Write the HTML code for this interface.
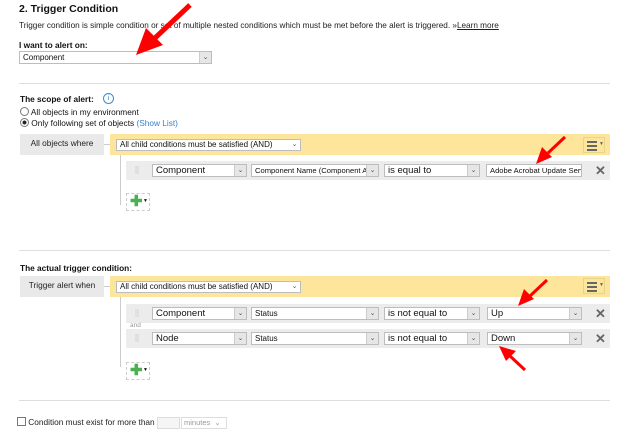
<!DOCTYPE html><html><head><style>
body{margin:0;width:627px;height:438px;background:#fff;font-family:"Liberation Sans",Arial,sans-serif;color:#111;position:relative;overflow:hidden}
.a{position:absolute;white-space:nowrap}
.sel{position:absolute;background:#fff;border:1px solid #bdbdbd;font-size:8px;line-height:12px;box-sizing:border-box;padding-left:3px;overflow:hidden;white-space:nowrap}
.sel .ar{position:absolute;right:0;top:0;bottom:0;width:11px;background:#e6e6e6;border-left:1px solid #ccc;font-size:7px;text-align:center;color:#555}
.big{font-size:9.5px}
.gbox{position:absolute;background:#e9e9e9;font-size:8.3px;color:#222}
.yel{position:absolute;background:#fde69b}
.row{position:absolute;background:#ececec}
.hr{position:absolute;left:19px;width:591px;height:1px;background:#ddd}
.x{position:absolute;font-size:13px;font-weight:bold;color:#666;line-height:14px}
.drag{position:absolute;width:4px;height:8px;background-image:radial-gradient(#bbb 40%,transparent 45%);background-size:2px 2px}
.menu{position:absolute;width:22px;height:16px;border:1px solid #e8d38a;box-sizing:border-box}
.menu i{position:absolute;left:3px;width:10px;height:2px;background:#666}
.menu b{position:absolute;left:15px;top:3px;font-size:5px;color:#666;font-weight:normal}
.plus{position:absolute;width:22px;height:16px;border:1px dashed #ccc}
.vl{position:absolute;width:1px;background:#ccc;left:120px}
</style></head><body>
<div class="a" style="left:19px;top:3px;font-size:10.5px;font-weight:bold">2. Trigger Condition</div>
<div class="a" style="left:19px;top:21px;font-size:8.2px;color:#222">Trigger condition is simple condition or set of multiple nested conditions which must be met before the alert is triggered. »<u>Learn more</u></div>
<div class="a" style="left:19px;top:40px;font-size:8.3px;font-weight:bold">I want to alert on:</div>
<div class="sel" style="left:19px;top:51px;width:193px;height:13px">Component<div class="ar">⌄</div></div>
<div class="hr" style="top:83px"></div>
<div class="a" style="left:20px;top:94px;font-size:8.3px;font-weight:bold">The scope of alert:</div>
<div class="a" style="left:103px;top:93px;width:9px;height:9px;border:1px solid #3a8fd6;border-radius:50%;font-size:7px;color:#3a8fd6;text-align:center;line-height:9px">i</div>
<div class="a" style="left:20px;top:107px;font-size:8.3px"><span style="display:inline-block;width:7px;height:7px;border:1px solid #777;border-radius:50%;vertical-align:-1px"></span> All objects in my environment</div>
<div class="a" style="left:20px;top:118px;font-size:8.3px"><span style="display:inline-block;width:7px;height:7px;border:1px solid #777;border-radius:50%;vertical-align:-1px;background:radial-gradient(#222 35%,#fff 45%)"></span> Only following set of objects <span style="color:#3a7fc6">(Show List)</span></div>
<div class="gbox" style="left:20px;top:134px;width:84px;height:21px;line-height:18px;text-align:center">All objects where</div>
<div class="a" style="left:104px;top:144px;width:6px;height:1px;background:#ccc"></div>
<div class="yel" style="left:110px;top:134px;width:500px;height:21px"></div>
<div class="sel" style="left:116px;top:139px;width:185px;height:12px;font-size:8px;line-height:10px">All child conditions must be satisfied (AND)<div class="ar" style="background:#fff;border:0">⌄</div></div>
<div class="menu" style="left:583px;top:137px"><i style="top:3px"></i><i style="top:7px"></i><i style="top:11px"></i><b>▼</b></div>
<div class="vl" style="top:155px;height:50px"></div>
<div class="row" style="left:126px;top:161px;width:484px;height:19px"></div>
<div class="drag" style="left:135px;top:166px"></div>
<div class="sel big" style="left:152px;top:164px;width:95px;height:13px">Component<div class="ar">⌄</div></div>
<div class="sel" style="left:251px;top:164px;width:128px;height:13px;font-size:7.6px">Component Name (Component Al<div class="ar">⌄</div></div>
<div class="sel big" style="left:384px;top:164px;width:96px;height:13px">is equal to<div class="ar">⌄</div></div>
<div class="sel" style="left:486px;top:164px;width:96px;height:13px;font-size:7.6px">Adobe Acrobat Update Serv</div>
<div class="x" style="left:595px;top:164px">✕</div>
<div class="plus" style="left:126px;top:193px"><span style="position:absolute;left:3px;top:1px;color:#4caf50;font-size:15px;font-weight:bold;line-height:14px">✚</span><span style="position:absolute;left:16px;top:4px;font-size:5px">▼</span></div>

<div class="hr" style="top:250px"></div>
<div class="a" style="left:20px;top:263px;font-size:8.3px;font-weight:bold">The actual trigger condition:</div>
<div class="gbox" style="left:20px;top:276px;width:84px;height:21px;line-height:18px;text-align:center">Trigger alert when</div>
<div class="a" style="left:104px;top:286px;width:6px;height:1px;background:#ccc"></div>
<div class="yel" style="left:110px;top:276px;width:500px;height:21px"></div>
<div class="sel" style="left:116px;top:281px;width:185px;height:12px;font-size:8px;line-height:10px">All child conditions must be satisfied (AND)<div class="ar" style="background:#fff;border:0">⌄</div></div>
<div class="menu" style="left:583px;top:278px"><i style="top:3px"></i><i style="top:7px"></i><i style="top:11px"></i><b>▼</b></div>
<div class="vl" style="top:297px;height:70px"></div>
<div class="row" style="left:126px;top:304px;width:484px;height:19px"></div>
<div class="drag" style="left:135px;top:309px"></div>
<div class="sel big" style="left:152px;top:307px;width:95px;height:13px">Component<div class="ar">⌄</div></div>
<div class="sel" style="left:251px;top:307px;width:128px;height:13px">Status<div class="ar">⌄</div></div>
<div class="sel big" style="left:384px;top:307px;width:96px;height:13px">is not equal to<div class="ar">⌄</div></div>
<div class="sel big" style="left:487px;top:307px;width:95px;height:13px">Up<div class="ar">⌄</div></div>
<div class="x" style="left:595px;top:307px">✕</div>
<div class="a" style="left:130px;top:322px;font-size:6.5px;color:#999">and</div>
<div class="row" style="left:126px;top:329px;width:484px;height:19px"></div>
<div class="drag" style="left:135px;top:334px"></div>
<div class="sel big" style="left:152px;top:332px;width:95px;height:13px">Node<div class="ar">⌄</div></div>
<div class="sel" style="left:251px;top:332px;width:128px;height:13px">Status<div class="ar">⌄</div></div>
<div class="sel big" style="left:384px;top:332px;width:96px;height:13px">is not equal to<div class="ar">⌄</div></div>
<div class="sel big" style="left:487px;top:332px;width:95px;height:13px">Down<div class="ar">⌄</div></div>
<div class="x" style="left:595px;top:332px">✕</div>
<div class="plus" style="left:126px;top:362px"><span style="position:absolute;left:3px;top:1px;color:#4caf50;font-size:15px;font-weight:bold;line-height:14px">✚</span><span style="position:absolute;left:16px;top:4px;font-size:5px">▼</span></div>

<div class="hr" style="top:400px"></div>
<div class="a" style="left:17px;top:417px;font-size:8.3px;color:#222"><span style="display:inline-block;width:7px;height:7px;border:1px solid #777;vertical-align:-1px"></span> Condition must exist for more than</div>
<div class="a" style="left:157px;top:417px;width:21px;height:10px;border:1px solid #ddd;background:#f5f5f5"></div>
<div class="a" style="left:181px;top:417px;width:42px;height:10px;border:1px solid #ddd;font-size:7.5px;color:#999;line-height:10px;padding-left:2px">minutes &nbsp;⌄</div>

<svg class="a" style="left:0;top:0" width="627" height="438">
<g stroke="#f00" stroke-width="5" fill="#f00">
<line x1="190" y1="5" x2="155" y2="38"/><polygon stroke="none" points="136,55 146,28 163,45"/>
<line x1="565" y1="137" x2="548" y2="153" stroke-width="3"/><polygon stroke="none" points="536,164 542,147 552,157"/>
<line x1="547" y1="280" x2="530" y2="296" stroke-width="3"/><polygon stroke="none" points="518,306 524,289 534,299"/>
<line x1="525" y1="370" x2="510" y2="356" stroke-width="3"/><polygon stroke="none" points="499,346 516,351 506,361"/>
</g></svg>
</body></html>
